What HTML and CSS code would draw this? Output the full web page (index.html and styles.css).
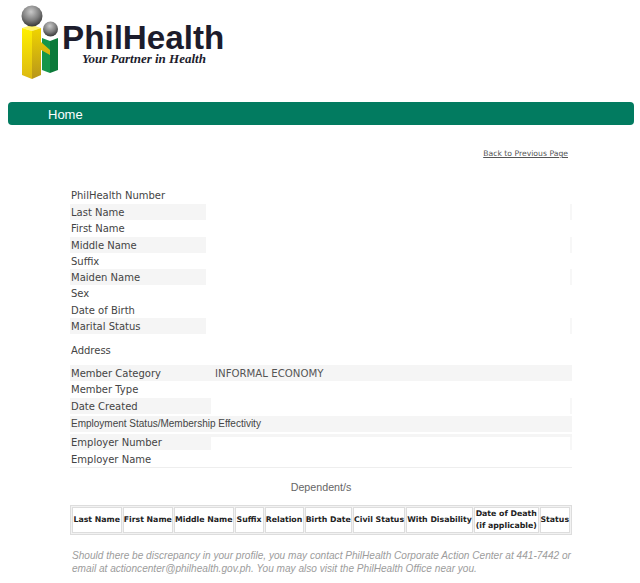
FILE: index.html
```html
<!DOCTYPE html>
<html lang="en">
<head>
<meta charset="utf-8">
<title>PhilHealth</title>
<link rel="stylesheet" href="styles.css">
</head>
<body>
<header class="brand">
<svg class="logo" width="240" height="94" viewBox="0 0 240 94" aria-label="PhilHealth">
  <defs>
    <radialGradient id="ball" cx="0.45" cy="0.3" r="0.75"><stop offset="0" stop-color="#c9c9c9"/><stop offset="0.55" stop-color="#7d7d7d"/><stop offset="1" stop-color="#2c2c2c"/></radialGradient>
    <linearGradient id="ya" x1="0" y1="0" x2="0" y2="1"><stop offset="0" stop-color="#fff000"/><stop offset="1" stop-color="#dcb912"/></linearGradient>
    <linearGradient id="yb" x1="0" y1="0" x2="0" y2="1"><stop offset="0" stop-color="#f0d400"/><stop offset="1" stop-color="#b8961a"/></linearGradient>
  </defs>
  <path d="M42 38 L50 41 L50 73 L42 70 Z" fill="#14964a"/>
  <path d="M50 41 L58 38 L58 70 L50 73 Z" fill="#0b7a3a"/>
  <path d="M22 28 L32 25 L41 28 L32 31 Z" fill="#fff26a"/>
  <path d="M22 28 L32 31 L32 79 L22 75 Z" fill="url(#ya)"/>
  <path d="M32 31 L41 28 L41 42 L50 50 L50 55 L41 50 L41 75 L32 79 Z" fill="url(#yb)"/>
  <circle cx="32" cy="16" r="10.500" fill="url(#ball)"/>
  <circle cx="50.500" cy="29" r="7.500" fill="url(#ball)"/>
  <text class="logo-name" x="62" y="49">PhilHealth</text>
  <text class="logo-tag" x="82" y="63">Your Partner in Health</text>
</svg>
</header>

<nav class="bar"><span class="bar-title">Home</span></nav>

<main class="content">
  <p class="back"><a href="#">Back to Previous Page</a></p>

  <section class="profile">
    <div class="row first"><span class="label">PhilHealth Number</span></div>
    <div class="row shade"><span class="label">Last Name</span><span class="value edge"></span></div>
    <div class="row"><span class="label">First Name</span></div>
    <div class="row shade"><span class="label">Middle Name</span><span class="value edge"></span></div>
    <div class="row"><span class="label">Suffix</span></div>
    <div class="row shade"><span class="label">Maiden Name</span><span class="value edge"></span></div>
    <div class="row"><span class="label">Sex</span></div>
    <div class="row"><span class="label">Date of Birth</span></div>
    <div class="row shade"><span class="label">Marital Status</span><span class="value edge"></span></div>
    <div class="row address"><span class="label">Address</span></div>
    <div class="row shade full"><span class="label">Member Category</span><span class="value">INFORMAL ECONOMY</span></div>
    <div class="row"><span class="label">Member Type</span></div>
    <div class="row shade wide"><span class="label">Date Created</span><span class="value edge"></span></div>
    <div class="row full plain"><span class="label">Employment Status/Membership Effectivity</span></div>
    <div class="row shade wide employer"><span class="label">Employer Number</span><span class="value edge"></span></div>
    <div class="row last"><span class="label">Employer Name</span></div>
  </section>

  <h2 class="dep-title">Dependent/s</h2>

  <table class="dep">
    <thead>
      <tr>
        <th>Last Name</th><th>First Name</th><th>Middle Name</th><th>Suffix</th><th>Relation</th><th>Birth Date</th><th>Civil Status</th><th>With Disability</th><th>Date of Death<br>(if applicable)</th><th>Status</th>
      </tr>
    </thead>
  </table>

  <p class="note">Should there be discrepancy in your profile, you may contact PhilHealth Corporate Action Center at 441-7442 or email at actioncenter@philhealth.gov.ph. You may also visit the PhilHealth Office near you.</p>
</main>
</body>
</html>
```
FILE: styles.css
```css
* { box-sizing: border-box; }
html, body { margin: 0; padding: 0; background: #fff; }
body { font-family: "DejaVu Sans", Verdana, sans-serif; color: #444; overflow: hidden; }

.brand { height: 102px; }
.logo { display: block; }
.logo-name { font-family: "Liberation Sans", Arial, sans-serif; font-weight: 700; font-size: 33.200px; fill: #1c1c2c; }
.logo-tag { font-family: "Liberation Serif", "Times New Roman", serif; font-style: italic; font-weight: 700; font-size: 13px; fill: #1c1c2c; }

.bar { margin: 0 6px 0 8px; height: 23px; background: #027b60; border-radius: 4px; display: flex; align-items: center; padding: 1px 0 0 40px; }
.bar-title { font-family: "Liberation Sans", Arial, sans-serif; font-size: 13px; color: #fff; }

.content { margin: 0 68px 0 70px; }
.back { margin: 0; padding-top: 24px; height: 62.750px; text-align: right; padding-right: 4px; font-size: 7.700px; line-height: 10px; }
.back a { color: #555; }

.profile { border-bottom: 1px solid #eee; font-size: 10px; }
.row { height: 16.250px; display: flex; align-items: center; }
.label { width: 136px; flex: none; height: 100%; display: flex; align-items: center; padding: 1px 0 0 1px; white-space: nowrap; }
.first .label { padding: 0 0 1px 1px; }
.shade .label { background: #f5f5f5; }
.value { flex: 1; height: 100%; display: flex; align-items: center; padding: 1px 0 0 9px; }
.edge { border-right: 2px solid #f7f7f7; }
.address { height: 31px; }
.full { background: #f5f5f5; }
.full .value { background: #f5f5f5; color: #555; font-size: 10.200px; }
.wide .label { width: 141px; }
.plain { margin: 2px 0; font-family: "Liberation Sans", Arial, sans-serif; font-size: 10px; }
.plain .label { width: auto; padding: 0 0 1px 1px; }
.employer { border-top: 3px solid #f5f5f5; height: 16px; }
.employer .label { padding: 0 0 2px 1px; }
.last { height: 17px; }

.dep-title { margin: 12px 0 11px; font-family: "Liberation Sans", Arial, sans-serif; font-weight: 400; font-size: 10.700px; line-height: 14px; text-align: center; color: #666; }

.dep { width: 502px; table-layout: fixed; border-collapse: separate; border-spacing: 1px; border: 1px solid #ddd; background: #f2f2f2; }
.dep th { height: 26px; padding: 0; background: #fff; border: 1px solid #ddd; font-size: 7.800px; line-height: 12px; font-weight: 700; color: #222; text-align: center; white-space: nowrap; }
.dep th:nth-child(1) { width: 49.500px; }
.dep th:nth-child(2) { width: 50.500px; }
.dep th:nth-child(3) { width: 59.500px; }
.dep th:nth-child(4) { width: 29px; }
.dep th:nth-child(5) { width: 39px; }
.dep th:nth-child(6) { width: 47.500px; }
.dep th:nth-child(7) { width: 52px; }
.dep th:nth-child(8) { width: 67px; }
.dep th:nth-child(9) { width: 64.500px; }
.dep th:nth-child(10) { width: 30.500px; }

.note { margin: 13.500px 0 0 2px; font-family: "Liberation Sans", Arial, sans-serif; font-style: italic; font-size: 10.100px; line-height: 13.200px; color: #9c9c9c; width: 505px; }
```
